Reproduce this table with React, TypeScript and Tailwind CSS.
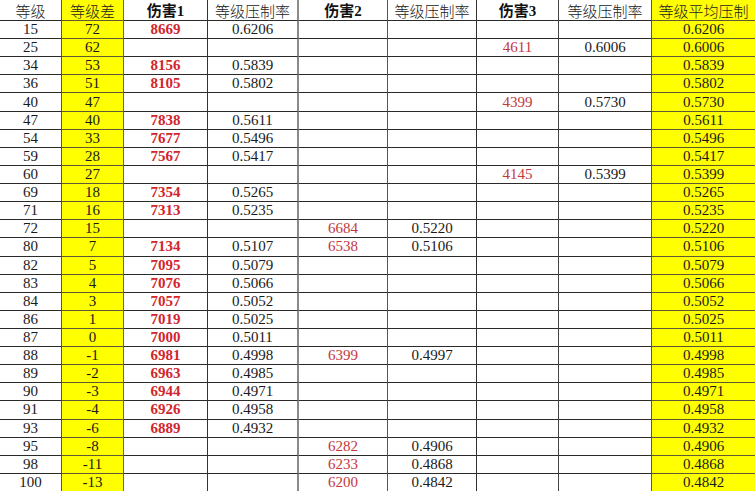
import React from "react";

type Row = [string, string, string, string, string, string, string, string, string];

// 等级, 等级差, 伤害1, 率1, 伤害2, 率2, 伤害3, 率3, 平均
const rows: Row[] = [
  ["15", "72", "8669", "0.6206", "", "", "", "", "0.6206"],
  ["25", "62", "", "", "", "", "4611", "0.6006", "0.6006"],
  ["34", "53", "8156", "0.5839", "", "", "", "", "0.5839"],
  ["36", "51", "8105", "0.5802", "", "", "", "", "0.5802"],
  ["40", "47", "", "", "", "", "4399", "0.5730", "0.5730"],
  ["47", "40", "7838", "0.5611", "", "", "", "", "0.5611"],
  ["54", "33", "7677", "0.5496", "", "", "", "", "0.5496"],
  ["59", "28", "7567", "0.5417", "", "", "", "", "0.5417"],
  ["60", "27", "", "", "", "", "4145", "0.5399", "0.5399"],
  ["69", "18", "7354", "0.5265", "", "", "", "", "0.5265"],
  ["71", "16", "7313", "0.5235", "", "", "", "", "0.5235"],
  ["72", "15", "", "", "6684", "0.5220", "", "", "0.5220"],
  ["80", "7", "7134", "0.5107", "6538", "0.5106", "", "", "0.5106"],
  ["82", "5", "7095", "0.5079", "", "", "", "", "0.5079"],
  ["83", "4", "7076", "0.5066", "", "", "", "", "0.5066"],
  ["84", "3", "7057", "0.5052", "", "", "", "", "0.5052"],
  ["86", "1", "7019", "0.5025", "", "", "", "", "0.5025"],
  ["87", "0", "7000", "0.5011", "", "", "", "", "0.5011"],
  ["88", "-1", "6981", "0.4998", "6399", "0.4997", "", "", "0.4998"],
  ["89", "-2", "6963", "0.4985", "", "", "", "", "0.4985"],
  ["90", "-3", "6944", "0.4971", "", "", "", "", "0.4971"],
  ["91", "-4", "6926", "0.4958", "", "", "", "", "0.4958"],
  ["93", "-6", "6889", "0.4932", "", "", "", "", "0.4932"],
  ["95", "-8", "", "", "6282", "0.4906", "", "", "0.4906"],
  ["98", "-11", "", "", "6233", "0.4868", "", "", "0.4868"],
  ["100", "-13", "", "", "6200", "0.4842", "", "", "0.4842"],
];

const headers = ["等级", "等级差", "伤害1", "等级压制率", "伤害2", "等级压制率", "伤害3", "等级压制率", "等级平均压制"];
const boldHead = [false, false, true, false, true, false, true, false, false];
const yellowCol = [false, true, false, false, false, false, false, false, true];

// vertical line colours per column (right edge)
const rightBorder = [
  "border-r border-r-[#555]",
  "border-r border-r-[#6e6a3c]",
  "border-r border-r-[#333]",
  "border-r-2 border-r-[#8a8a8a]",
  "border-r border-r-[#555]",
  "border-r border-r-[#333]",
  "border-r border-r-[#444]",
  "border-r border-r-[#555]",
  "",
];

const cellText = (col: number) => {
  if (col === 2) return "text-[#d2262c] font-bold";
  if (col === 4 || col === 6) return "text-[#c4383c]";
  return "text-[#1a1a1a]";
};

export default function App() {
  return (
    <div className="w-[755px] h-[491px] bg-white grid grid-cols-[62px_62px_84px_91px_89px_89px_82px_93px_103px] grid-rows-[20px_repeat(26,minmax(0,1fr))] overflow-hidden font-['Liberation_Serif','Noto_Sans_CJK_SC',serif]">
      {headers.map((h, i) => (
        <div
          key={"h" + i}
          className={`flex items-center justify-center leading-none ${rightBorder[i]} ${
            yellowCol[i] ? "bg-[#ffff00]" : ""
          }`}
        >
          {boldHead[i] ? (
            <span className="text-[15px] font-bold text-[#111]">
              <span className="font-['Noto_Sans_CJK_SC',sans-serif]">{h.slice(0, 2)}</span>
              {h.slice(2)}
            </span>
          ) : (
            <span className="text-[15px] font-light text-[#222] font-['Noto_Sans_CJK_SC',sans-serif]">{h}</span>
          )}
        </div>
      ))}
      {rows.map((r, ri) =>
        r.map((v, ci) => (
          <div
            key={ri + "-" + ci}
            className={`flex items-center justify-center leading-none text-[15px] border-t ${
              yellowCol[ci] ? "bg-[#ffff00] border-t-[#5e5a34]" : "border-t-[#2a2a2a]"
            } ${rightBorder[ci]} ${cellText(ci)}`}
          >
            {v}
          </div>
        ))
      )}
    </div>
  );
}
